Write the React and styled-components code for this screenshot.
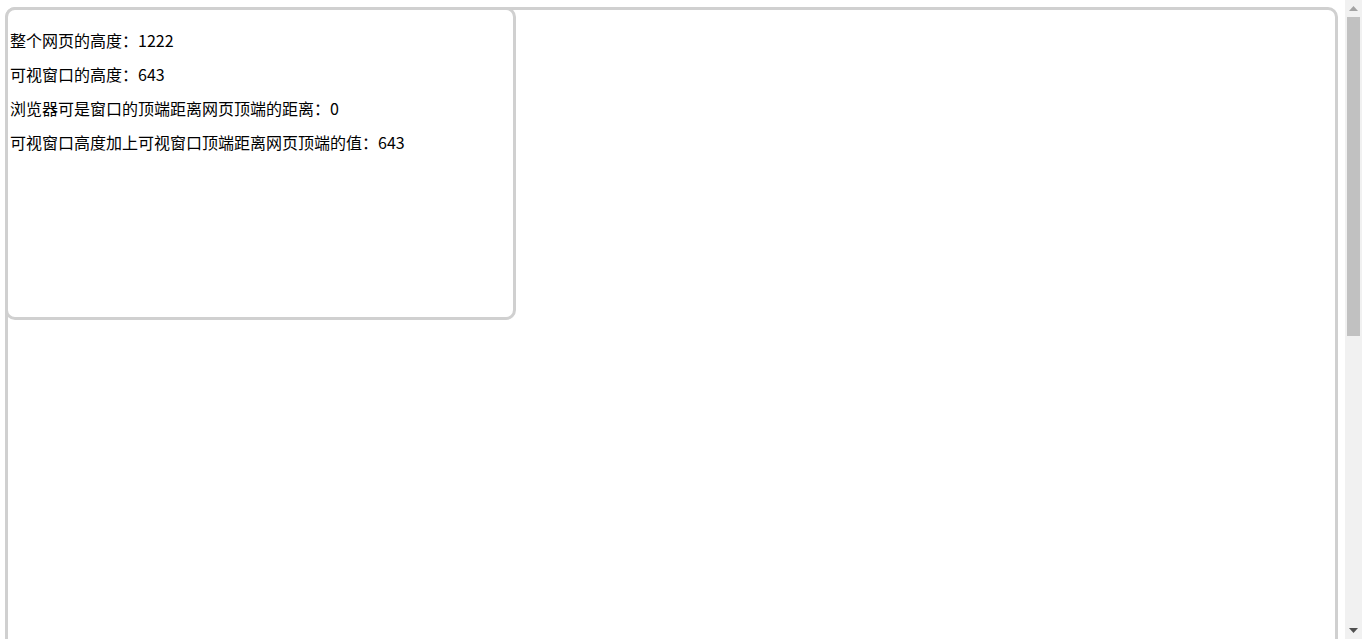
import React from "react";
import styled, { createGlobalStyle } from "styled-components";

const GlobalStyle = createGlobalStyle`
  html, body {
    margin: 0;
    padding: 0;
    height: 100%;
    overflow: hidden;
    background: #fff;
  }
  body {
    font-family: "Noto Sans CJK SC", "Noto Sans", sans-serif;
    color: #000;
  }
`;

const Window = styled.div`
  display: flex;
  height: 100vh;
`;

const Viewport = styled.div`
  flex: 1;
  min-width: 0;
  overflow: hidden;
`;

const Page = styled.div`
  box-sizing: border-box;
  height: 1210px;
  margin: 7px 7px 5px 5px;
  border: 3px solid #d0d0d0;
  border-radius: 10px;
`;

const InfoPanel = styled.div`
  box-sizing: border-box;
  width: 511px;
  height: 313px;
  margin: -3px 0 0 -3px;
  padding: 5px 0 0 2px;
  border: 3px solid #d0d0d0;
  border-radius: 10px;
  background: #fff;
`;

const Line = styled.p`
  margin: 16px 0;
  font-size: 16px;
  line-height: 18px;
`;

const Scrollbar = styled.div`
  width: 17px;
  flex: none;
  background: #f1f1f1;
  display: flex;
  flex-direction: column;
`;

const Arrow = styled.div`
  height: 17px;
  flex: none;
  display: flex;
  align-items: center;
  justify-content: center;
`;

const Track = styled.div`
  flex: 1;
  padding: 0 2px;
`;

const Thumb = styled.div`
  height: 319px;
  background: #c1c1c1;
`;

function ArrowIcon({ down, color }) {
  return (
    <svg width="9" height="5" viewBox="0 0 9 5">
      <path d={down ? "M0 0H9L4.5 5Z" : "M0 5H9L4.5 0Z"} fill={color} />
    </svg>
  );
}

const lines = [
  ["整个网页的高度：", 1222],
  ["可视窗口的高度：", 643],
  ["浏览器可是窗口的顶端距离网页顶端的距离：", 0],
  ["可视窗口高度加上可视窗口顶端距离网页顶端的值：", 643],
];

export default function App() {
  return (
    <>
      <GlobalStyle />
      <Window>
        <Viewport>
          <Page>
            <InfoPanel>
              {lines.map(([label, value]) => (
                <Line key={label}>
                  {label}
                  {value}
                </Line>
              ))}
            </InfoPanel>
          </Page>
        </Viewport>
        <Scrollbar>
          <Arrow>
            <ArrowIcon color="#a3a3a3" />
          </Arrow>
          <Track>
            <Thumb />
          </Track>
          <Arrow>
            <ArrowIcon down color="#505050" />
          </Arrow>
        </Scrollbar>
      </Window>
    </>
  );
}
